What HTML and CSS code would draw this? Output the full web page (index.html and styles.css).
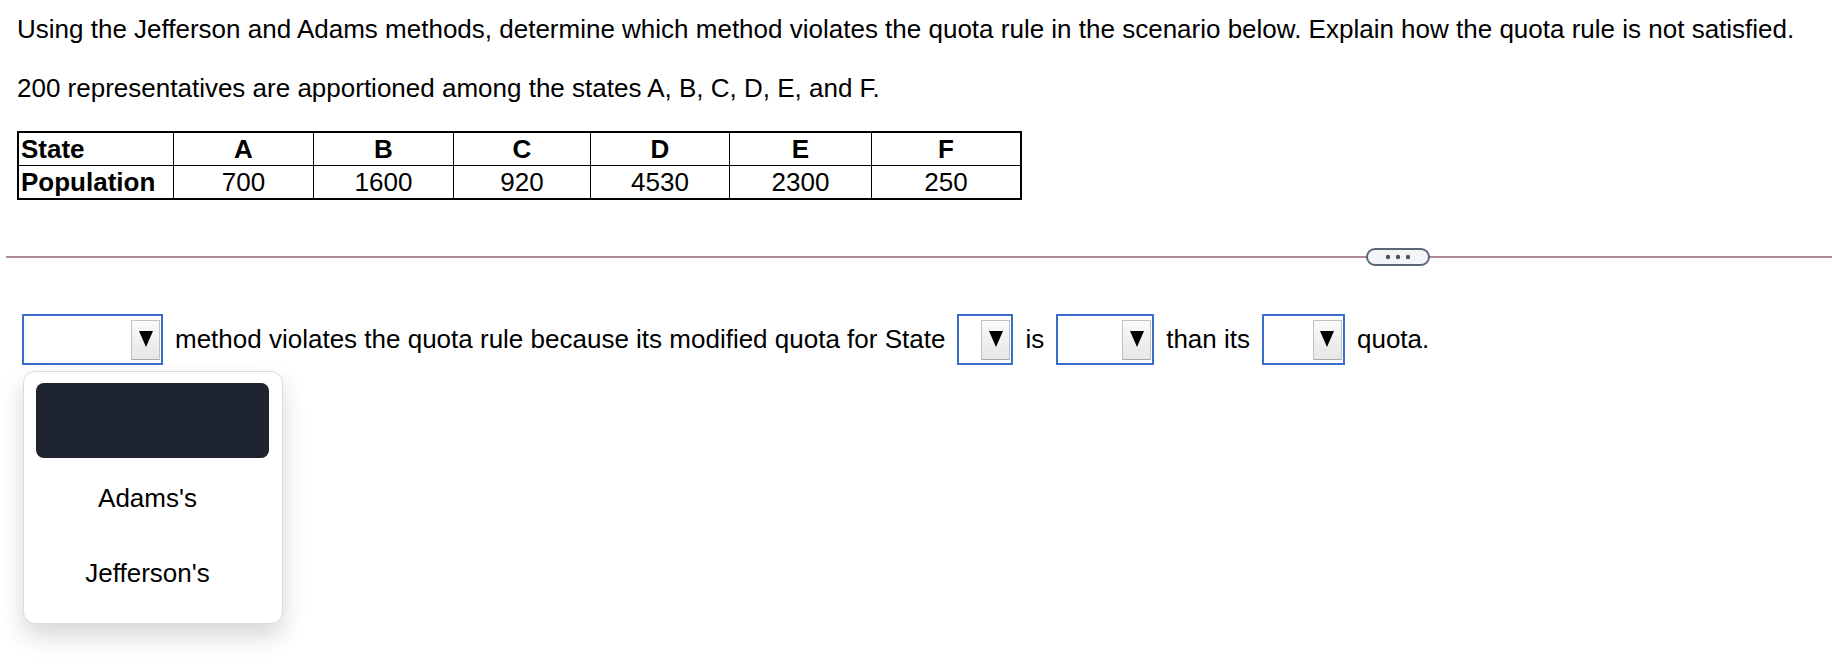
FILE: index.html
```html
<!DOCTYPE html>
<html lang="en">
<head>
<meta charset="utf-8">
<title>Quota rule</title>
<link rel="stylesheet" href="styles.css">
</head>
<body>
<div class="page">
  <div class="content">
    <p class="prompt">Using the Jefferson and Adams methods, determine which method violates the quota rule in the scenario below. Explain how the quota rule is not satisfied.</p>
    <p class="scenario">200 representatives are apportioned among the states A, B, C, D, E, and F.</p>
    <table class="data">
      <tr class="head">
        <th class="label">State</th><th>A</th><th>B</th><th>C</th><th>D</th><th>E</th><th>F</th>
      </tr>
      <tr>
        <th class="label">Population</th><td>700</td><td>1600</td><td>920</td><td>4530</td><td>2300</td><td>250</td>
      </tr>
    </table>
  </div>
  <div class="divider">
    <span class="more"><svg width="26" height="6" viewBox="0 0 26 6"><circle cx="3" cy="3" r="2.2"/><circle cx="13" cy="3" r="2.2"/><circle cx="23" cy="3" r="2.2"/></svg></span>
  </div>
  <div class="answer">
    <span class="dd w1"><span class="btn"><svg width="16" height="18" viewBox="0 0 16 18"><polygon points="1,1 15,1 8,17"/></svg></span></span>
    <span class="txt">method violates the quota rule because its modified quota for State</span>
    <span class="dd w2"><span class="btn"><svg width="16" height="18" viewBox="0 0 16 18"><polygon points="1,1 15,1 8,17"/></svg></span></span>
    <span class="txt">is</span>
    <span class="dd w3"><span class="btn"><svg width="16" height="18" viewBox="0 0 16 18"><polygon points="1,1 15,1 8,17"/></svg></span></span>
    <span class="txt">than its</span>
    <span class="dd w4"><span class="btn"><svg width="16" height="18" viewBox="0 0 16 18"><polygon points="1,1 15,1 8,17"/></svg></span></span>
    <span class="txt">quota.</span>
  </div>
  <div class="menu">
    <div class="opt selected"></div>
    <div class="opt">Adams's</div>
    <div class="opt">Jefferson's</div>
  </div>
</div>
</body>
</html>
```

FILE: styles.css
```css
html, body {
  margin: 0;
  padding: 0;
  background: #ffffff;
}
body {
  font-family: "Liberation Sans", Arial, Helvetica, sans-serif;
  font-size: 26px;
  color: #000000;
}
.page {
  position: relative;
  width: 1832px;
  height: 670px;
  padding-top: 14px;
  box-sizing: border-box;
  overflow: hidden;
}
.content {
  padding-left: 17px;
}
.prompt, .scenario {
  margin: 0;
  line-height: 30px;
  white-space: nowrap;
}
.scenario {
  margin-top: 29px;
}
.data {
  margin-top: 28px;
  border-collapse: collapse;
  border: 2px solid #000;
}
.data th, .data td {
  border: 1px solid #000;
  height: 32px;
  padding: 0 2px;
  text-align: center;
  line-height: 30px;
}
.data th {
  font-weight: bold;
}
.data td {
  font-weight: normal;
}
.data .label {
  text-align: left;
  width: 150px;
}
.data tr > :nth-child(2),
.data tr > :nth-child(3) { width: 135px; }
.data tr > :nth-child(4) { width: 132px; }
.data tr > :nth-child(5) { width: 134px; }
.data tr > :nth-child(6) { width: 137px; }
.data tr > :nth-child(7) { width: 144px; }

.divider {
  position: relative;
  margin-top: 56px;
  margin-left: 6px;
  height: 2px;
  background: #b08894;
}
.more {
  position: absolute;
  left: 1360px;
  top: -8px;
  width: 64px;
  height: 18px;
  box-sizing: border-box;
  border: 2px solid #5b6676;
  border-radius: 9px;
  background: #f4f5f7;
  display: flex;
  align-items: center;
  justify-content: center;
}
.more svg { fill: #4b5461; display: block; }

.answer {
  margin-top: 56px;
  padding-left: 22px;
  display: flex;
  align-items: center;
  gap: 12px;
  height: 51px;
  white-space: nowrap;
}
.dd {
  height: 51px;
  box-sizing: border-box;
  border: 2px solid #3a6ccc;
  background: #fff;
  display: flex;
  align-items: center;
  justify-content: flex-end;
  padding-right: 1px;
  flex: none;
}
.w1 { width: 141px; }
.w2 { width: 56px; }
.w3 { width: 98px; }
.w4 { width: 83px; }
.btn {
  width: 29px;
  height: 40px;
  box-sizing: border-box;
  border: 1px solid #c2c2c2;
  border-bottom-color: #a9a9a9;
  background: linear-gradient(#fafafa, #e6e6e6);
  display: flex;
  align-items: center;
  justify-content: center;
}
.btn svg { display: block; fill: #000; margin-top: -1px; }

.menu {
  position: absolute;
  left: 23px;
  top: 371px;
  width: 260px;
  height: 253px;
  box-sizing: border-box;
  padding: 11px 13px 0 12px;
  background: #fff;
  border: 1px solid #dcdcdc;
  border-radius: 12px;
  box-shadow: 0 12px 24px rgba(0, 0, 0, 0.16);
}
.opt {
  height: 75px;
  display: flex;
  align-items: center;
  justify-content: center;
  padding-top: 6px;
  padding-right: 10px;
  box-sizing: border-box;
}
.opt.selected {
  background: #1e2430;
  border-radius: 8px;
  padding: 0;
}
```
